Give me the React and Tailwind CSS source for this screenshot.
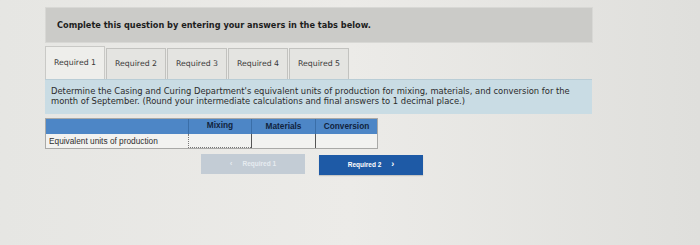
import React from "react";

const tabs = ["Required 1", "Required 2", "Required 3", "Required 4", "Required 5"];

export default function App() {
  return (
    <div className="w-[700px] h-[245px] overflow-hidden bg-gradient-to-r from-[#e6e6e3] via-[#ecebe8] to-[#dfdfdc] pt-[7px] pl-[45px]">
      {/* question header */}
      <div className="w-[548px] h-[36px] bg-[#cbcbc8] border border-[#d8d8d5] flex items-center pl-[11px] font-['DejaVu_Sans',sans-serif] text-[8.2px] font-bold text-[#1d1d1d]">
        Complete this question by entering your answers in the tabs below.
      </div>

      {/* tabs */}
      <div className="flex mt-[3px] h-[33px] items-end font-['DejaVu_Sans',sans-serif] text-[7.8px] text-[#3a3a3a]">
        {tabs.map((t, i) => (
          <div
            key={t}
            className={
              i === 0
                ? "w-[60px] h-[33px] mr-[1px] flex items-center justify-center bg-[#eeeeeb] border border-b-0 border-[#c9c9c6]"
                : "w-[60px] h-[31px] mr-[1px] flex items-center justify-center bg-[#e4e4e1] border border-b-0 border-[#c2c2bf]"
            }
          >
            {t}
          </div>
        ))}
      </div>

      {/* instructions */}
      <div className="w-[547px] h-[35px] bg-[#c9dce4] border-t border-[#b9cdd6] pl-[6px] pr-[16px] pt-[6px] font-['DejaVu_Sans',sans-serif] text-[8.4px] leading-[10px] text-[#2b2b2b]">
        Determine the Casing and Curing Department's equivalent units of production for mixing, materials, and conversion for the month of September. (Round your intermediate calculations and final answers to 1 decimal place.)
      </div>

      {/* table */}
      <div className="mt-[4px] w-[333px] border border-[#a9a9a7] font-['Liberation_Sans',sans-serif] text-[8.3px]">
        <div className="flex h-[15px] bg-[#4d86c6] text-[#10233d] font-bold">
          <div className="w-[142px]" />
          <div className="w-[63px] border-l border-[#3a6ea8] flex items-start justify-center">Mixing</div>
          <div className="w-[64px] border-l border-[#3a6ea8] flex items-center justify-center">Materials</div>
          <div className="flex-1 border-l border-[#3a6ea8] flex items-center justify-center">Conversion</div>
        </div>
        <div className="flex h-[14px] bg-[#f2f2f0] text-[#2f2f2f]">
          <div className="w-[142px] pl-[3px] flex items-center">Equivalent units of production</div>
          <div className="w-[63px] border-l border-dotted border-b border-[#777]" />
          <div className="w-[64px] border-l border-[#555]" />
          <div className="flex-1 border-l border-[#555]" />
        </div>
      </div>

      {/* nav buttons */}
      <div className="flex mt-[5px] ml-[156px] gap-[14px] font-['Liberation_Sans',sans-serif] text-[6.5px] font-bold">
        <div className="w-[104px] h-[20px] bg-[#c3ccd5] text-[#e6ebf0] flex items-center justify-center gap-[10px]">
          <span className="text-[8px]">&lsaquo;</span>
          <span>Required 1</span>
        </div>
        <div className="w-[104px] h-[20px] mt-[1px] bg-[#1e5aa6] text-white flex items-center justify-center gap-[10px] shadow-[0_1px_1px_rgba(0,0,0,0.15)]">
          <span>Required 2</span>
          <span className="text-[9px]">&rsaquo;</span>
        </div>
      </div>
    </div>
  );
}
